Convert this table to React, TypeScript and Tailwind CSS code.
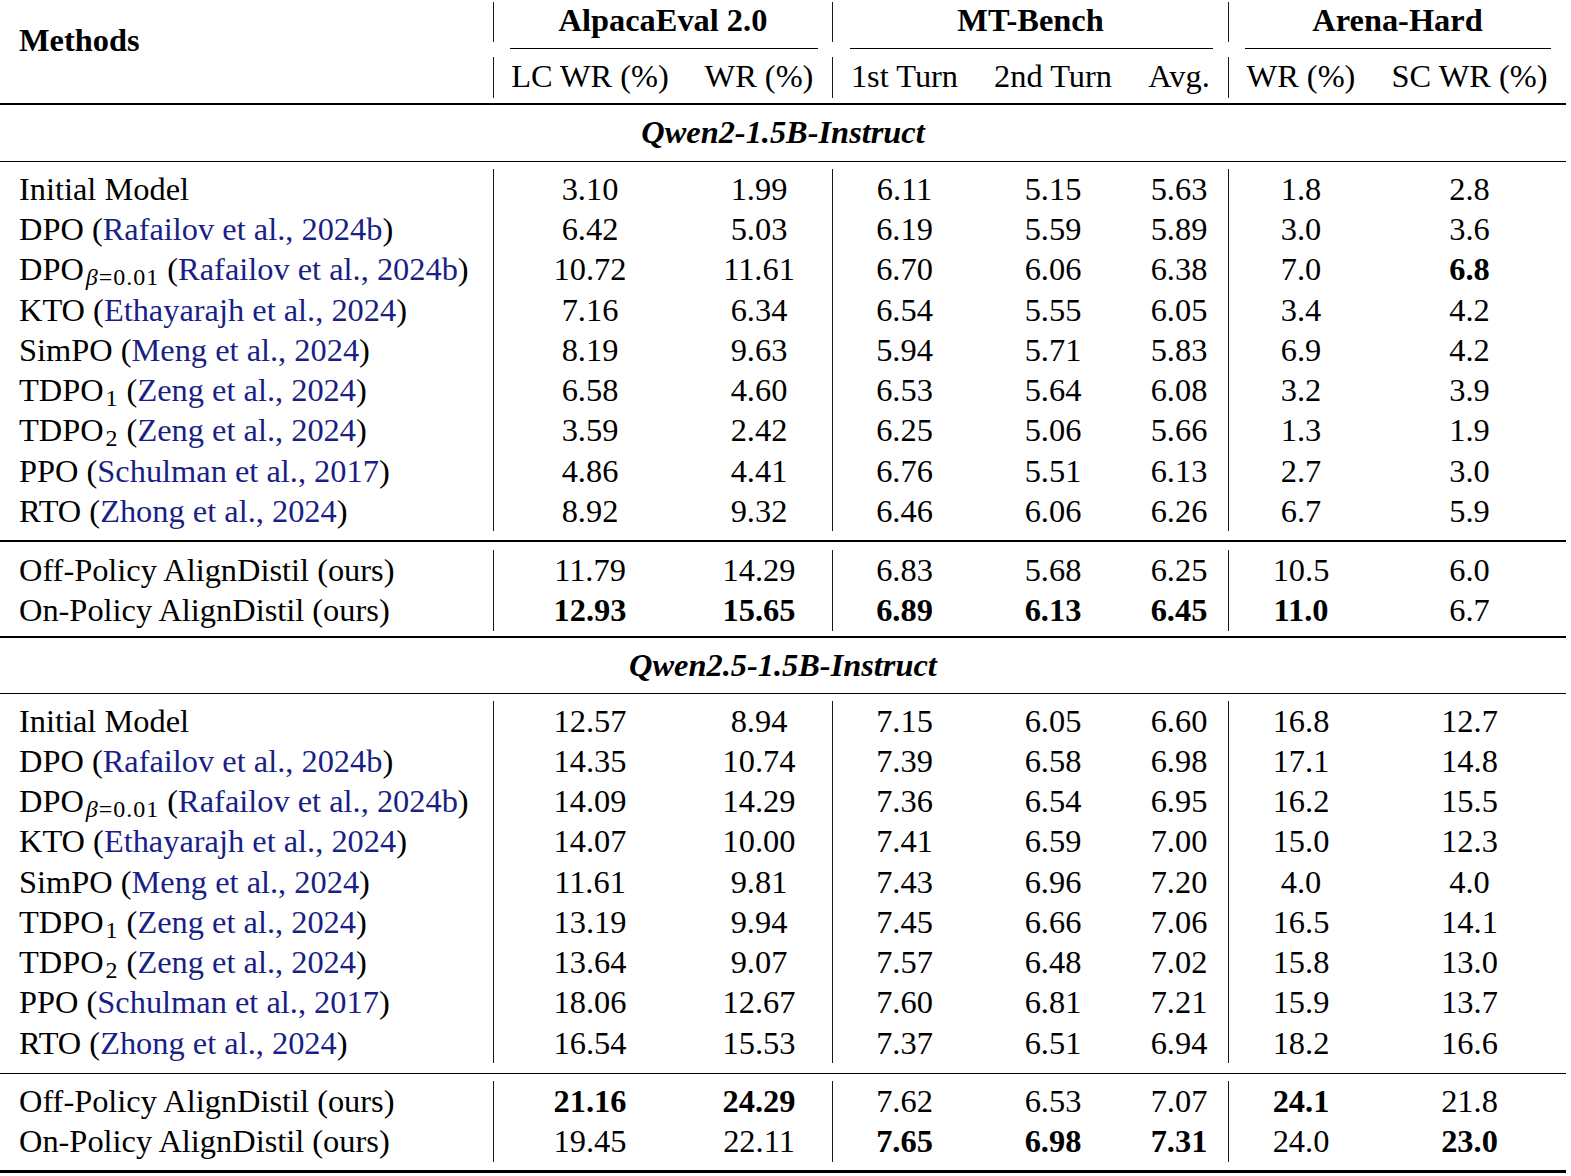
import React from 'react';

type Row = {
  method: React.ReactNode;
  values: string[];
  bold?: number[];
};

const Cite = ({ children }: { children: React.ReactNode }) => (
  <span className="text-[#1a1f86]">{children}</span>
);

const Sub = ({ children }: { children: React.ReactNode }) => (
  <span className="relative top-[5px] ml-[2px] mr-[8px] inline-block text-[24px] leading-none tracking-[1px]">
    {children}
  </span>
);

const beta = (
  <Sub>
    <span className="italic">β</span>=0.01
  </Sub>
);

const methods: React.ReactNode[] = [
  <>Initial Model</>,
  <>DPO (<Cite>Rafailov et al., 2024b</Cite>)</>,
  <>DPO{beta}(<Cite>Rafailov et al., 2024b</Cite>)</>,
  <>KTO (<Cite>Ethayarajh et al., 2024</Cite>)</>,
  <>SimPO (<Cite>Meng et al., 2024</Cite>)</>,
  <>TDPO<Sub>1</Sub>(<Cite>Zeng et al., 2024</Cite>)</>,
  <>TDPO<Sub>2</Sub>(<Cite>Zeng et al., 2024</Cite>)</>,
  <>PPO (<Cite>Schulman et al., 2017</Cite>)</>,
  <>RTO (<Cite>Zhong et al., 2024</Cite>)</>,
];

const qwen2: string[][] = [
  ['3.10', '1.99', '6.11', '5.15', '5.63', '1.8', '2.8'],
  ['6.42', '5.03', '6.19', '5.59', '5.89', '3.0', '3.6'],
  ['10.72', '11.61', '6.70', '6.06', '6.38', '7.0', '6.8'],
  ['7.16', '6.34', '6.54', '5.55', '6.05', '3.4', '4.2'],
  ['8.19', '9.63', '5.94', '5.71', '5.83', '6.9', '4.2'],
  ['6.58', '4.60', '6.53', '5.64', '6.08', '3.2', '3.9'],
  ['3.59', '2.42', '6.25', '5.06', '5.66', '1.3', '1.9'],
  ['4.86', '4.41', '6.76', '5.51', '6.13', '2.7', '3.0'],
  ['8.92', '9.32', '6.46', '6.06', '6.26', '6.7', '5.9'],
];

const qwen25: string[][] = [
  ['12.57', '8.94', '7.15', '6.05', '6.60', '16.8', '12.7'],
  ['14.35', '10.74', '7.39', '6.58', '6.98', '17.1', '14.8'],
  ['14.09', '14.29', '7.36', '6.54', '6.95', '16.2', '15.5'],
  ['14.07', '10.00', '7.41', '6.59', '7.00', '15.0', '12.3'],
  ['11.61', '9.81', '7.43', '6.96', '7.20', '4.0', '4.0'],
  ['13.19', '9.94', '7.45', '6.66', '7.06', '16.5', '14.1'],
  ['13.64', '9.07', '7.57', '6.48', '7.02', '15.8', '13.0'],
  ['18.06', '12.67', '7.60', '6.81', '7.21', '15.9', '13.7'],
  ['16.54', '15.53', '7.37', '6.51', '6.94', '18.2', '16.6'],
];

const baselines = (data: string[][], boldRow?: { row: number; cols: number[] }): Row[] =>
  data.map((values, i) => ({
    method: methods[i],
    values,
    bold: boldRow && boldRow.row === i ? boldRow.cols : [],
  }));

const ours = (off: string[], offBold: number[], on: string[], onBold: number[]): Row[] => [
  { method: 'Off-Policy AlignDistil (ours)', values: off, bold: offBold },
  { method: 'On-Policy AlignDistil (ours)', values: on, bold: onBold },
];

const GRID = 'grid grid-cols-[493px_193px_146px_144px_154px_98px_145px_193px]';
const SEP = [1, 3, 6];

const DataRow = ({ row }: { row: Row }) => (
  <div className={`${GRID} h-[40.25px]`}>
    <div className="flex items-center whitespace-nowrap pl-[19px]">
      <span>{row.method}</span>
    </div>
    {row.values.map((v, i) => (
      <div
        key={i}
        className={`flex items-center justify-center ${SEP.includes(i + 1) ? 'border-l border-[#1a1a1a]' : ''} ${
          row.bold?.includes(i) ? 'font-bold' : ''
        }`}
      >
        {v}
      </div>
    ))}
  </div>
);

const Block = ({ rows }: { rows: Row[] }) => (
  <div>
    {rows.map((r, i) => (
      <DataRow key={i} row={r} />
    ))}
  </div>
);

const SectionTitle = ({ title, className }: { title: string; className: string }) => (
  <div className={`flex items-center justify-center font-bold italic ${className}`}>{title}</div>
);

export default function App() {
  return (
    <div className="min-h-[1176px] w-[1571px] bg-white font-['Liberation_Serif',serif] text-[32.4px] leading-none text-black">
      <div className="w-[1566px] pt-[2px]">
        {/* header */}
        <div className={`${GRID} grid-rows-[40px_15px_41px]`}>
          <div className="col-start-1 row-span-3 row-start-1 pl-[19px] pt-[18px] font-bold leading-[40px]">Methods</div>
          <div className="col-span-2 col-start-2 row-start-1 flex items-center justify-center border-l border-[#1a1a1a] pb-[3px] font-bold">
            AlpacaEval 2.0
          </div>
          <div className="col-span-3 col-start-4 row-start-1 flex items-center justify-center border-l border-[#1a1a1a] pb-[3px] font-bold">
            MT-Bench
          </div>
          <div className="col-span-2 col-start-7 row-start-1 flex items-center justify-center border-l border-[#1a1a1a] pb-[3px] font-bold">
            Arena-Hard
          </div>

          <div className="col-span-2 col-start-2 row-start-2 pl-[17px] pr-[14px] pt-[5.5px]">
            <div className="h-[1.3px] bg-black" />
          </div>
          <div className="col-span-3 col-start-4 row-start-2 pl-[18px] pr-[15px] pt-[5.5px]">
            <div className="h-[1.3px] bg-black" />
          </div>
          <div className="col-span-2 col-start-7 row-start-2 pl-[17px] pr-[15px] pt-[5.5px]">
            <div className="h-[1.3px] bg-black" />
          </div>

          {['LC WR (%)', 'WR (%)', '1st Turn', '2nd Turn', 'Avg.', 'WR (%)', 'SC WR (%)'].map((h, i) => (
            <div
              key={i}
              className={`row-start-3 flex items-center justify-center whitespace-nowrap pb-[2px] ${
                SEP.includes(i + 1) ? 'border-l border-[#1a1a1a]' : ''
              } ${i === 0 ? 'col-start-2' : ''}`}
            >
              {h}
            </div>
          ))}
        </div>

        <div className="h-[12px] pt-[5px]">
          <div className="h-[2px] bg-black" />
        </div>
        <SectionTitle title="Qwen2-1.5B-Instruct" className="h-[45px]" />
        <div className="h-[14px] pt-[6px]">
          <div className="h-[1.3px] bg-black" />
        </div>

        <Block rows={baselines(qwen2, { row: 2, cols: [6] })} />
        <div className="h-[19px] pt-[9px]">
          <div className="h-[1.3px] bg-black" />
        </div>
        <Block
          rows={ours(
            ['11.79', '14.29', '6.83', '5.68', '6.25', '10.5', '6.0'],
            [],
            ['12.93', '15.65', '6.89', '6.13', '6.45', '11.0', '6.7'],
            [0, 1, 2, 3, 4, 5],
          )}
        />

        <div className="h-[12px] pt-[5.5px]">
          <div className="h-[1.3px] bg-black" />
        </div>
        <SectionTitle title="Qwen2.5-1.5B-Instruct" className="h-[44px]" />
        <div className="h-[14px] pt-[6px]">
          <div className="h-[1.3px] bg-black" />
        </div>

        <Block rows={baselines(qwen25)} />
        <div className="h-[18px] pt-[9.5px]">
          <div className="h-[1.3px] bg-black" />
        </div>
        <Block
          rows={ours(
            ['21.16', '24.29', '7.62', '6.53', '7.07', '24.1', '21.8'],
            [0, 1, 5],
            ['19.45', '22.11', '7.65', '6.98', '7.31', '24.0', '23.0'],
            [2, 3, 4, 6],
          )}
        />
        <div className="h-[14px] pt-[8px]">
          <div className="h-[3px] bg-black" />
        </div>
      </div>
    </div>
  );
}
